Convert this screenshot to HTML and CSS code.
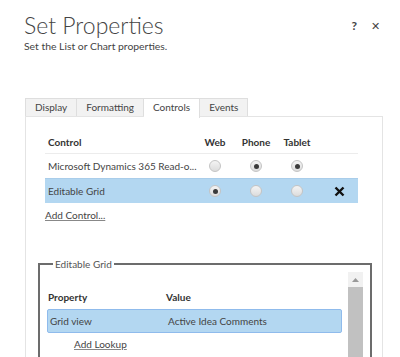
FILE: index.html
```html
<!DOCTYPE html>
<html lang="en">

<head>
  <meta charset="UTF-8">
  <meta name="viewport" content="width=device-width, initial-scale=1.0">
  <title>Set Properties</title>
  <link rel="stylesheet" href="styles.css">
</head>

<body>

  <div class="dialog">
    <div class="dialog-header">
      <div class="heading">
        <h1 class="title">Set Properties</h1>
        <p class="subtitle">Set the List or Chart properties.</p>
      </div>
      <div class="header-actions">
        <span class="help">?</span>
        <span class="close">&#x2715;</span>
      </div>
    </div>

    <div class="tabs">
      <span class="tab">Display</span>
      <span class="tab">Formatting</span>
      <span class="tab active">Controls</span>
      <span class="tab">Events</span>
    </div>

    <div class="tab-panel">
      <div class="controls-grid">
        <div class="row head">
          <span class="cell name">Control</span>
          <span class="cell">Web</span>
          <span class="cell">Phone</span>
          <span class="cell">Tablet</span>
          <span class="cell"></span>
        </div>
        <div class="row">
          <span class="cell name">Microsoft Dynamics 365 Read-o...</span>
          <span class="cell"><span class="radio"></span></span>
          <span class="cell"><span class="radio checked"></span></span>
          <span class="cell"><span class="radio checked"></span></span>
          <span class="cell"></span>
        </div>
        <div class="row selected">
          <span class="cell name">Editable Grid</span>
          <span class="cell"><span class="radio checked"></span></span>
          <span class="cell"><span class="radio"></span></span>
          <span class="cell"><span class="radio"></span></span>
          <span class="cell remove">
            <svg width="11" height="11" viewBox="0 0 11 11">
              <path d="M1.5 1.5 L9.5 9.5 M9.5 1.5 L1.5 9.5" stroke="#111" stroke-width="2.4" />
            </svg>
          </span>
        </div>
      </div>

      <a href="#" class="add-link">Add Control...</a>

      <fieldset class="grid-props">
        <legend>Editable Grid</legend>
        <div class="props-body">
          <div class="props-list">
            <div class="prop-row head">
              <span>Property</span>
              <span>Value</span>
            </div>
            <div class="prop-row selected">
              <span>Grid view</span>
              <span>Active Idea Comments</span>
            </div>
            <a href="#" class="lookup-link">Add Lookup</a>
          </div>
          <div class="scrollbar">
            <div class="scroll-up">
              <svg width="7" height="4" viewBox="0 0 7 4"><path d="M0 4 L3.5 0 L7 4 Z" fill="#999" /></svg>
            </div>
            <div class="scroll-thumb"></div>
          </div>
        </div>
      </fieldset>
    </div>
  </div>

</body>

</html>
```

FILE: styles.css
```css
body {
  font-family: 'Lato', 'Open Sans', sans-serif;
  background-color: #fff;
  color: #444;
  margin: 0;
  padding: 0;
  font-size: 10px;
}

.dialog {
  width: 400px;
  height: 357px;
  overflow: hidden;
}

.dialog-header {
  display: flex;
  justify-content: space-between;
  padding: 11px 20px 0 24px;
  height: 98px;
  box-sizing: border-box;
}

.title {
  font-size: 23px;
  font-weight: 300;
  color: #444;
  margin: 0;
  line-height: 28px;
}

.subtitle {
  margin: 1px 0 0;
  font-size: 10.4px;
  color: #444;
}

.header-actions {
  display: flex;
  gap: 14px;
  padding-top: 7px;
  font-size: 12px;
  font-weight: 700;
  color: #444;
}

.close {
  font-size: 11px;
  font-weight: 400;
  padding-top: 1px;
}

/* tabs */
.tabs {
  display: flex;
  margin-left: 25px;
  height: 18px;
}

.tab {
  padding: 0 9px;
  line-height: 17px;
  background-color: #f2f2f2;
  border: 1px solid #dedede;
  border-bottom: none;
  border-left: none;
  font-size: 10px;
  color: #444;
}

.tab:first-child {
  border-left: 1px solid #dedede;
}

.tab.active {
  background-color: #fff;
  position: relative;
  z-index: 1;
  height: 19px;
}

.tab-panel {
  margin-left: 25px;
  width: 358px;
  border: 1px solid #e4e4e4;
  border-bottom: none;
  padding: 14px 0 0 19px;
  box-sizing: border-box;
  height: 260px;
}

/* controls list */
.controls-grid {
  width: 313px;
}

.row {
  display: grid;
  grid-template-columns: 150px 40px 42px 40px 41px;
  align-items: center;
  height: 24px;
  color: #444;
}

.row.head {
  height: 22px;
  border-bottom: 1px solid #ececec;
  font-weight: 700;
  color: #333;
}

.row.selected {
  background-color: #b3d7f1;
  border-top: 1px solid #a9cdea;
}

.cell {
  display: flex;
  justify-content: center;
}

.cell.name {
  justify-content: flex-start;
  padding-left: 3px;
  white-space: nowrap;
}

.remove {
  padding-left: 4px;
}

.radio {
  width: 10px;
  height: 10px;
  border-radius: 50%;
  border: 1px solid #c4c4c4;
  background: linear-gradient(#f4f4f4, #dcdcdc);
  display: flex;
  align-items: center;
  justify-content: center;
}

.radio.checked::after {
  content: '';
  width: 5px;
  height: 5px;
  border-radius: 50%;
  background-color: #3a3a3a;
}

.add-link {
  display: inline-block;
  margin-top: 6px;
  color: #444;
  text-decoration: underline;
  text-decoration-color: #888;
}

/* editable grid box */
.grid-props {
  margin: 37px 0 0 -7px;
  width: 334px;
  border: 2px solid #6c6c6c;
  padding: 2px 7px 0 7px;
  box-sizing: border-box;
  height: 120px;
}

.grid-props legend {
  padding: 0 2px;
  margin-left: 6px;
  color: #555;
  font-size: 10px;
}

.props-body {
  display: grid;
  grid-template-columns: 1fr 15px;
  gap: 6px;
  height: 100%;
}

.props-list {
  padding-top: 13px;
}

.prop-row {
  display: grid;
  grid-template-columns: 118px 1fr;
  align-items: center;
  height: 22px;
}

.prop-row.head {
  font-weight: 700;
  color: #333;
  padding-left: 1px;
  height: 24px;
}

.prop-row.selected {
  background-color: #b3d7f1;
  border: 1px solid #8fbbec;
  border-radius: 2px;
  padding-left: 2px;
}

.lookup-link {
  display: inline-block;
  margin: 5px 0 0 27px;
  color: #444;
  text-decoration: underline;
  text-decoration-color: #888;
}

.scrollbar {
  display: flex;
  flex-direction: column;
  height: 100%;
}

.scroll-up {
  height: 15px;
  background-color: #f1f1f1;
  display: flex;
  align-items: center;
  justify-content: center;
}

.scroll-thumb {
  flex: 1;
  background-color: #c1c1c1;
}
```
